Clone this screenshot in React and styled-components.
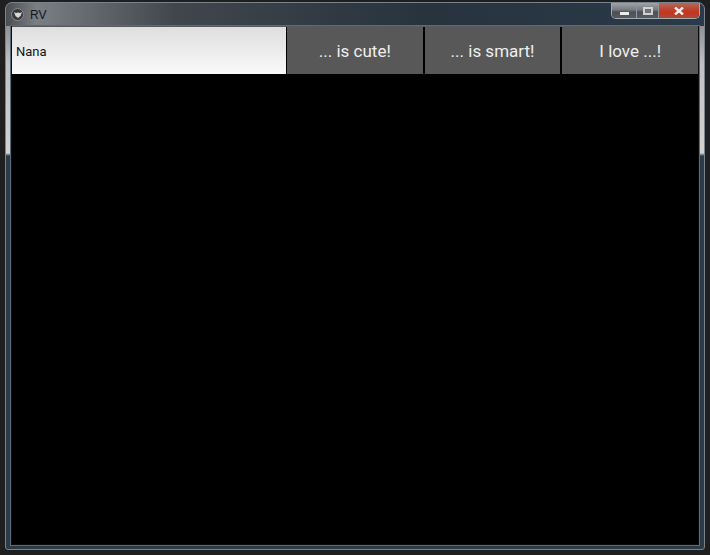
import React from 'react';
import styled, { createGlobalStyle } from 'styled-components';

const GlobalStyle = createGlobalStyle`
  html, body {
    margin: 0;
    height: 100%;
    background: #1f1f1f;
    overflow: hidden;
  }
`;

const Page = styled.div`
  width: 710px;
  height: 555px;
  padding: 2px 5px 5px 5px;
  box-sizing: border-box;
`;

const Window = styled.div`
  height: 100%;
  box-sizing: border-box;
  display: flex;
  flex-direction: column;
  border: 1px solid #78838d;
  border-radius: 7px 7px 3px 3px;
  background:
    linear-gradient(180deg, #6e7276 0, #8d9094 22px, #bfc1c4 60px, #d0d2d4 150px, #2b3b4a 153px, #2b3b4a 100%);
`;

const TitleBar = styled.div`
  height: 23px;
  flex: none;
  display: flex;
  align-items: center;
  padding-left: 5px;
  gap: 5px;
  background: linear-gradient(90deg, #4a4d51 0, #7b7e82 30px, #6f7277 60px, #40464c 170px, #28333e 420px, #2a3a48 100%);
  border-radius: 6px 6px 0 0;
`;

const AppIcon = styled.div`
  width: 11px;
  height: 11px;
  border-radius: 50%;
  background: #3a3a3c;
  border: 1px solid #8a8a8a;
  display: flex;
  align-items: center;
  justify-content: center;
`;

const Title = styled.span`
  font: 12px "Liberation Sans", Arial, sans-serif;
  color: #14181e;
  margin-left: 1px;
`;

const Controls = styled.div`
  margin-left: auto;
  margin-right: 4px;
  height: 15px;
  display: flex;
  align-self: flex-start;
  border: 1px solid #a3a9af;
  border-top: none;
  border-radius: 0 0 5px 5px;
  overflow: hidden;
`;

const ControlButton = styled.div`
  width: ${(p) => p.$w}px;
  display: flex;
  align-items: center;
  justify-content: center;
  border-left: ${(p) => (p.$first ? 'none' : '1px solid #8f959b')};
  background: ${(p) =>
    p.$close
      ? 'linear-gradient(180deg, #b8685a 0, #b8442e 45%, #c8331c 65%, #a84a3a 100%)'
      : 'linear-gradient(180deg, #a0a4a8 0, #777b80 45%, #4b5057 60%, #555b62 100%)'};
`;

const MinimizeGlyph = styled.svg`
  margin-top: 6px;
`;

const Client = styled.div`
  flex: 1;
  margin: 0 5px 4px 5px;
  background: #000;
  border: 1px solid #0c0c0c;
  border-top: none;
  outline: 1px solid #5d6a76;
  display: flex;
  flex-direction: column;
`;

const Row = styled.div`
  height: 48px;
  box-sizing: border-box;
  display: flex;
  gap: 2px;
  border-top: 1px solid #565b60;
`;

const NameInput = styled.div`
  width: 274px;
  box-sizing: border-box;
  padding: 2px 0 0 4px;
  margin-right: -1px;
  display: flex;
  align-items: center;
  font: 13px Roboto, "Liberation Sans", sans-serif;
  color: #151515;
  background: linear-gradient(180deg, #dedede 0, #fafafa 100%);
`;

const ActionButton = styled.div`
  flex: 1;
  display: flex;
  align-items: center;
  justify-content: center;
  font: 17px Roboto, "Liberation Sans", sans-serif;
  color: #eeeeee;
  background: #585858;
`;

const App = () => {
  return (
    <Page>
      <GlobalStyle />
      <Window>
        <TitleBar>
          <AppIcon>
            <svg width="8" height="6" viewBox="0 0 8 6">
              <path d="M0 0 L2 1 L4 .5 L6 1 L8 0 L6.5 4 L4 6 L1.5 4 Z" fill="#d8d8d8" />
            </svg>
          </AppIcon>
          <Title>RV</Title>
          <Controls>
            <ControlButton $w={24} $first>
              <MinimizeGlyph width="9" height="3" viewBox="0 0 9 3">
                <rect x="0" y="0" width="9" height="3" fill="#ececec" />
              </MinimizeGlyph>
            </ControlButton>
            <ControlButton $w={21}>
              <svg width="10" height="8" viewBox="0 0 10 8">
                <rect x="1" y="1" width="8" height="6" fill="#6f7378" stroke="#d0d0d0" strokeWidth="2" />
              </svg>
            </ControlButton>
            <ControlButton $w={40} $close>
              <svg width="10" height="8" viewBox="0 0 10 8">
                <path d="M1 .5 L9 7.5 M9 .5 L1 7.5" stroke="#efefef" strokeWidth="2.4" />
              </svg>
            </ControlButton>
          </Controls>
        </TitleBar>
        <Client>
          <Row>
            <NameInput>Nana</NameInput>
            <ActionButton>... is cute!</ActionButton>
            <ActionButton>... is smart!</ActionButton>
            <ActionButton>I love ...!</ActionButton>
          </Row>
        </Client>
      </Window>
    </Page>
  );
};

export default App;
